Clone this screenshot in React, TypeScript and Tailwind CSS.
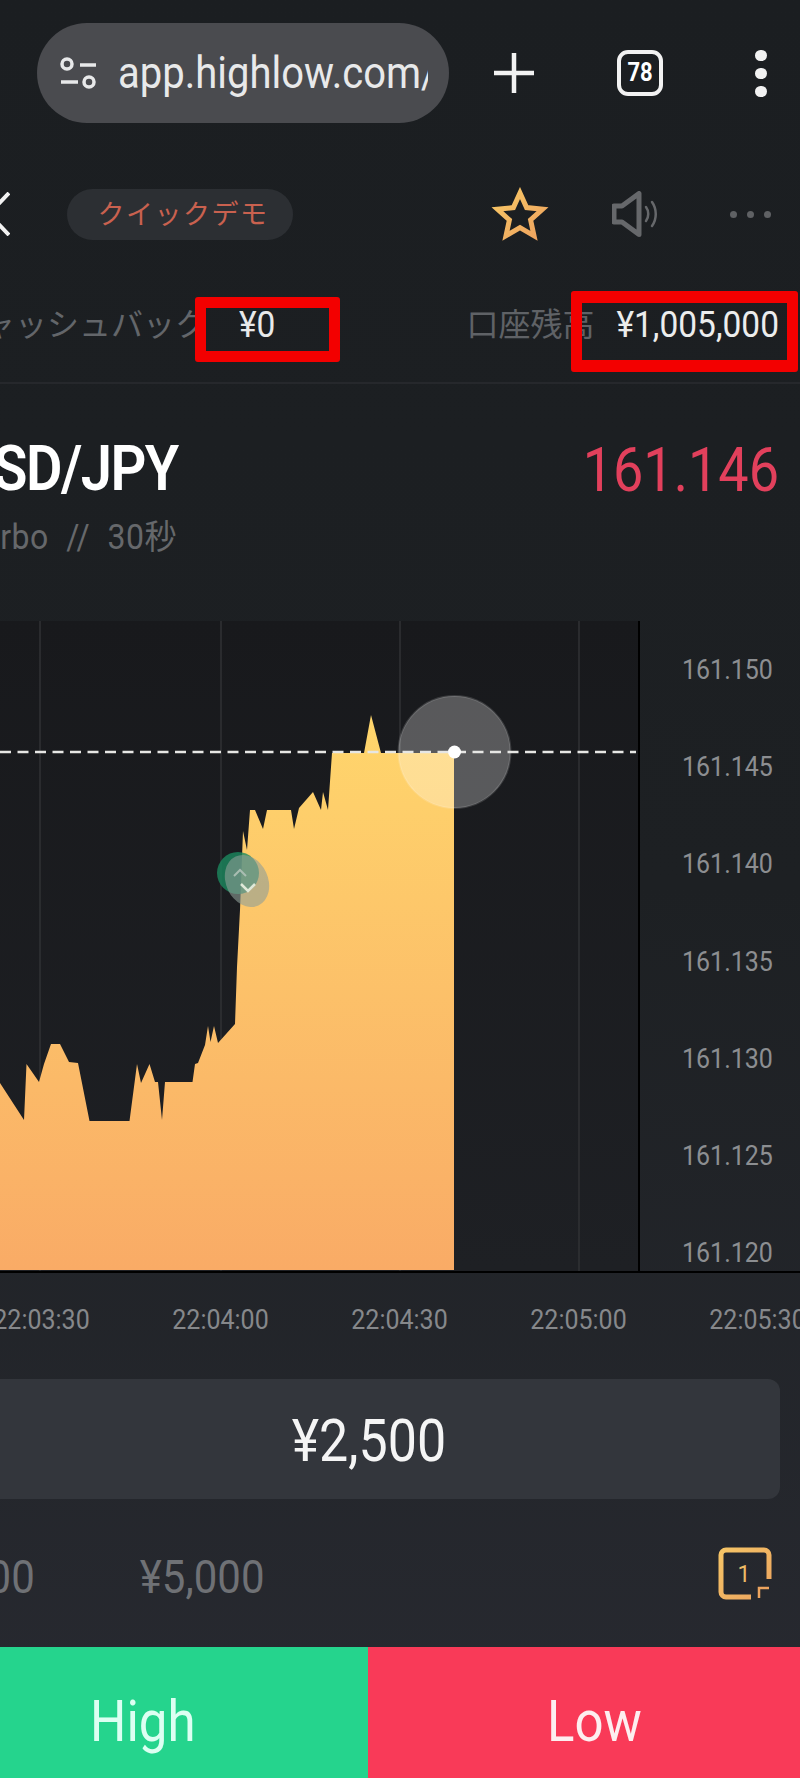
import React from 'react';

const chartPoints = [
  [0, 1083], [24, 1120], [26.5, 1064], [39, 1082], [44, 1064], [51, 1044], [60, 1044], [69, 1062], [78, 1063],
  [89.5, 1121], [129.5, 1121], [137, 1064], [141, 1083], [149.5, 1064], [155, 1082], [158, 1082], [162, 1120],
  [165, 1082], [192.5, 1082], [195, 1064], [198, 1063], [205, 1045], [208, 1026], [210.5, 1042], [214, 1026],
  [218, 1043], [235, 1024], [237, 967], [240, 910], [243, 831], [247, 850], [250, 810], [255, 810], [263, 829],
  [267, 810], [291, 810], [294, 829], [299, 808], [313, 792], [321, 810], [323, 792], [328, 810], [332, 753],
  [364, 753], [371, 715], [381, 753], [454, 753], [454, 1270], [0, 1270],
];

const axisLabels = ['161.150', '161.145', '161.140', '161.135', '161.130', '161.125', '161.120'];
const timeLabels = ['22:03:30', '22:04:00', '22:04:30', '22:05:00', '22:05:30'];

function TuneIcon() {
  return (
    <svg width="36" height="32" viewBox="0 0 36 32" fill="none" stroke="#e8e9ea" strokeWidth="3.5" className="shrink-0">
      <circle cx="7" cy="7" r="5" />
      <path d="M20 8h16" />
      <path d="M1 25h17" />
      <circle cx="29" cy="25" r="5" />
    </svg>
  );
}

function Speaker() {
  return (
    <svg width="48" height="46" viewBox="0 0 48 46" fill="none" stroke="#66686b" className="shrink-0">
      <path d="M2 15h8L27 2.500v41L10 31H2z" strokeWidth="5" strokeLinejoin="round" />
      <path d="M34 16c3 4 3 10 0 14" strokeWidth="2.500" strokeLinecap="round" />
      <path d="M40 11c5 7 5 17 0 24" strokeWidth="2.500" strokeLinecap="round" />
    </svg>
  );
}

function Star() {
  return (
    <svg width="58" height="54" viewBox="0 0 58 54" fill="none" className="shrink-0">
      <defs>
        <linearGradient id="star" x1="0" y1="0" x2="1" y2="1">
          <stop offset="0" stopColor="#f8c765" />
          <stop offset="1" stopColor="#eea35f" />
        </linearGradient>
      </defs>
      <path
        d="M29 6l6.600 14.600 16 1.600-12 10.800 3.400 15.800L29 40.600 15 48.800l3.400-15.800-12-10.800 16-1.600z"
        stroke="url(#star)"
        strokeWidth="5"
        strokeLinejoin="miter"
      />
    </svg>
  );
}

function Chart() {
  const pts = chartPoints.map((p) => p.join(',')).join(' ');
  return (
    <svg width="638" height="650" viewBox="0 621 638 650" className="block shrink-0">
      <defs>
        <linearGradient id="area" x1="0" y1="715" x2="0" y2="1270" gradientUnits="userSpaceOnUse">
          <stop offset="0" stopColor="#ffd66c" />
          <stop offset="1" stopColor="#f9ab66" />
        </linearGradient>
      </defs>
      {[40, 221, 400, 579].map((x) => (
        <line key={x} x1={x} x2={x} y1="621" y2="1271" stroke="#303235" strokeWidth="1.5" />
      ))}
      <polygon points={pts} fill="url(#area)" />
      <circle cx="454.5" cy="752" r="56" fill="#fff" fillOpacity="0.28" stroke="#fff" strokeOpacity="0.14" strokeWidth="2" />
      <line x1="0" x2="636" y1="752" y2="752" stroke="#e6e6e4" strokeWidth="2.500" strokeDasharray="11 6.500" />
      <circle cx="454.5" cy="752" r="6.500" fill="#fff" />
      {/* entry marker */}
      <circle cx="238" cy="873" r="21" fill="#1c8a5f" fillOpacity="0.8" />
      <ellipse cx="247" cy="881" rx="21" ry="27" fill="#8f9f98" fillOpacity="0.6" transform="rotate(-25 247 881)" />
      <path d="M234 876l6-6 6 6" fill="none" stroke="#a9bdb2" strokeWidth="2" />
      <path d="M241 884l7 7 7-7" fill="none" stroke="#dfe8d8" strokeWidth="2.500" />
    </svg>
  );
}

export default function App() {
  return (
    <div className="relative w-[800px] h-[1778px] overflow-hidden bg-linear-to-b from-[#1b1e21] via-[#1d2023] to-[#282a31] font-['Roboto','Noto_Sans_CJK_JP',sans-serif] text-white">
      {/* browser bar */}
      <div className="flex items-center h-[146px]">
        <div className="ml-[37px] w-[412px] h-[100px] rounded-[50px] bg-[#4a4b4f] flex items-center pl-[23px] gap-[22px]">
          <TuneIcon />
          <div className="w-[310px] overflow-hidden whitespace-nowrap text-[40px] leading-[60px] text-[#e8e9ea] scale-y-[1.12]">app.highlow.com/</div>
        </div>
        <svg width="42" height="42" viewBox="0 0 42 42" className="ml-[44px] shrink-0" stroke="#f2f2f2" strokeWidth="4.500">
          <path d="M21 1v40M1 21h40" />
        </svg>
        <div className="ml-[82px] w-[46px] h-[46px] rounded-[11px] border-[4px] border-[#f2f2f2] flex items-center justify-center text-[22px] font-bold leading-none">
          <span className="scale-y-[1.2]">78</span>
        </div>
        <div className="ml-[92px] flex flex-col gap-[7px]">
          <span className="w-[12px] h-[11px] rounded-full bg-[#f2f2f2]" />
          <span className="w-[12px] h-[11px] rounded-full bg-[#f2f2f2]" />
          <span className="w-[12px] h-[11px] rounded-full bg-[#f2f2f2]" />
        </div>
      </div>

      {/* toolbar */}
      <div className="flex items-center h-[136px]">
        <svg width="10" height="44" viewBox="0 0 10 44" fill="none" stroke="#f2f2f2" strokeWidth="4" className="shrink-0">
          <path d="M9 1L-11 22 9 43" />
        </svg>
        <div className="ml-[57px] w-[226px] h-[51px] rounded-[26px] bg-[#2c2f33] flex items-center justify-center pl-[6px] pt-[2px] text-[27px] tracking-[1.5px] text-[#c9614f]">クイックデモ</div>
        <div className="ml-[198px]"><Star /></div>
        <div className="ml-[63px]"><Speaker /></div>
        <div className="ml-[70px] flex gap-[10px]">
          <span className="w-[7px] h-[7px] rounded-full bg-[#5f6164]" />
          <span className="w-[7px] h-[7px] rounded-full bg-[#5f6164]" />
          <span className="w-[7px] h-[7px] rounded-full bg-[#5f6164]" />
        </div>
      </div>

      {/* balances */}
      <div className="relative flex items-center h-[102px] pb-[14px] border-b-2 border-[#26282c] whitespace-nowrap">
        <span className="ml-[-49px] w-[288px] text-[32px] text-[#63666a]">キャッシュバック</span>
        <span className="text-[33.5px] text-[#e8e9ea] scale-y-[1.1]">¥0</span>
        <span className="ml-auto text-[32px] text-[#5f6266]">口座残高</span>
        <span className="ml-[22px] mr-[21px] text-[33.5px] text-[#eceded] scale-y-[1.1]">¥1,005,000</span>
        <div className="absolute left-[195px] top-[15px] w-[145px] h-[65px] border-[11px] rounded-[3px] border-[#f30000]" />
        <div className="absolute left-[571px] top-[9px] w-[227px] h-[81px] border-x-[11px] border-y-[12px] rounded-[3px] border-[#f30000]" />
      </div>

      {/* pair and rate */}
      <div className="flex h-[237px] pt-[47px] justify-between">
        <div className="ml-[-42px]">
          <div className="text-[56px] leading-[74px] font-semibold tracking-[-1.5px] whitespace-nowrap scale-y-[1.14]">USD/JPY</div>
          <div className="mt-[12px] ml-[6px] text-[32px] leading-[40px] text-[#66686b] whitespace-nowrap tracking-[0.5px] [word-spacing:9px] scale-y-[1.08]">Turbo // 30秒</div>
        </div>
        <div className="self-start mt-[2px] mr-[21px] text-[54px] leading-[74px] text-[#e2405c] scale-y-[1.14]">161.146</div>
      </div>

      {/* chart */}
      <div className="flex h-[652px] border-b-2 border-black">
        <div className="w-[638px] h-[650px] bg-linear-to-b from-[#18191c] to-[#1e2024] shrink-0">
          <Chart />
        </div>
        <div className="flex-1 border-l-2 border-black pl-[42px] pt-[37px] flex flex-col gap-[73.200px] text-[25px] leading-[24px] text-[#8c8e91]">
          {axisLabels.map((label) => (
            <span key={label} className="scale-y-[1.14]">{label}</span>
          ))}
        </div>
      </div>

      {/* time axis */}
      <div className="flex h-[106px] pt-[33px] ml-[-48px] text-[25px] leading-[28px] text-[#86888b]">
        {timeLabels.map((t) => (
          <span key={t} className="w-[179px] h-[28px] text-center shrink-0 whitespace-nowrap scale-y-[1.14]">{t}</span>
        ))}
      </div>

      {/* amount */}
      <div className="w-[780px] h-[120px] rounded-r-[12px] bg-[#33363c] flex items-center justify-center pr-[42px] pt-[6px] text-[52px] text-[#f5f5f5]">
        <span className="scale-y-[1.14]">¥2,500</span>
      </div>

      <div className="flex items-center h-[148px] pt-[7px] whitespace-nowrap text-[42px] text-[#6f7175]">
        <span className="ml-[-90px] scale-y-[1.12]">¥1,000</span>
        <span className="ml-[105px] scale-y-[1.12]">¥5,000</span>
        <svg width="54" height="54" viewBox="0 0 54 54" fill="none" className="ml-auto mr-[28px] mb-[5px] shrink-0">
          <defs>
            <linearGradient id="box" x1="0" y1="0" x2="1" y2="1">
              <stop offset="0" stopColor="#f5c466" />
              <stop offset="1" stopColor="#eca45f" />
            </linearGradient>
          </defs>
          <path d="M33 50H8a5 5 0 0 1-5-5V8a5 5 0 0 1 5-5h38a5 5 0 0 1 5 5v24" stroke="url(#box)" strokeWidth="5" />
          <path d="M41 51V41h10" stroke="#eca45f" strokeWidth="2.500" />
          <text x="26" y="35" fontSize="23" fill="#eebb66" textAnchor="middle">1</text>
        </svg>
      </div>

      {/* buttons */}
      <div className="flex h-[131px] text-[51px]">
        <div className="w-[368px] bg-[#25d48d] text-[#dcfff2] flex items-center pl-[90px] pt-[20px]">
          <span className="scale-y-[1.14]">High</span>
        </div>
        <div className="flex-1 bg-[#f93a58] text-[#fdeef0] flex items-center pl-[179px] pt-[20px]">
          <span className="scale-y-[1.14]">Low</span>
        </div>
      </div>
    </div>
  );
}
